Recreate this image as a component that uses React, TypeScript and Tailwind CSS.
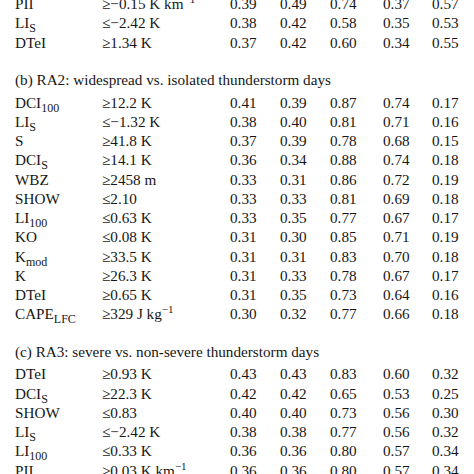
import React from "react";

type Row = { l: React.ReactNode; t: React.ReactNode; v: string[] };

const Sub = ({ c }: { c: string }) => (
  <span className="relative top-[4px] text-[12px] leading-none">{c}</span>
);
const Sup = ({ c }: { c: string }) => (
  <span className="relative -top-[6px] text-[11px] leading-none">{c}</span>
);

const L = (base: string, sub?: string) => (
  <span>
    {base}
    {sub ? <Sub c={sub} /> : null}
  </span>
);

const a: Row[] = [
  { l: L("PII"), t: <span>≥−0.15 K km<Sup c="−1" /></span>, v: ["0.39", "0.49", "0.74", "0.37", "0.57"] },
  { l: L("LI", "S"), t: "≤−2.42 K", v: ["0.38", "0.42", "0.58", "0.35", "0.53"] },
  { l: L("DTeI"), t: "≥1.34 K", v: ["0.37", "0.42", "0.60", "0.34", "0.55"] },
];

const b: Row[] = [
  { l: L("DCI", "100"), t: "≥12.2 K", v: ["0.41", "0.39", "0.87", "0.74", "0.17"] },
  { l: L("LI", "S"), t: "≤−1.32 K", v: ["0.38", "0.40", "0.81", "0.71", "0.16"] },
  { l: L("S"), t: "≥41.8 K", v: ["0.37", "0.39", "0.78", "0.68", "0.15"] },
  { l: L("DCI", "S"), t: "≥14.1 K", v: ["0.36", "0.34", "0.88", "0.74", "0.18"] },
  { l: L("WBZ"), t: "≥2458 m", v: ["0.33", "0.31", "0.86", "0.72", "0.19"] },
  { l: L("SHOW"), t: "≤2.10", v: ["0.33", "0.33", "0.81", "0.69", "0.18"] },
  { l: L("LI", "100"), t: "≤0.63 K", v: ["0.33", "0.35", "0.77", "0.67", "0.17"] },
  { l: L("KO"), t: "≤0.08 K", v: ["0.31", "0.30", "0.85", "0.71", "0.19"] },
  { l: L("K", "mod"), t: "≥33.5 K", v: ["0.31", "0.31", "0.83", "0.70", "0.18"] },
  { l: L("K"), t: "≥26.3 K", v: ["0.31", "0.33", "0.78", "0.67", "0.17"] },
  { l: L("DTeI"), t: "≥0.65 K", v: ["0.31", "0.35", "0.73", "0.64", "0.16"] },
  { l: L("CAPE", "LFC"), t: <span>≥329 J kg<Sup c="−1" /></span>, v: ["0.30", "0.32", "0.77", "0.66", "0.18"] },
];

const c: Row[] = [
  { l: L("DTeI"), t: "≥0.93 K", v: ["0.43", "0.43", "0.83", "0.60", "0.32"] },
  { l: L("DCI", "S"), t: "≥22.3 K", v: ["0.42", "0.42", "0.65", "0.53", "0.25"] },
  { l: L("SHOW"), t: "≤0.83", v: ["0.40", "0.40", "0.73", "0.56", "0.30"] },
  { l: L("LI", "S"), t: "≤−2.42 K", v: ["0.38", "0.38", "0.77", "0.56", "0.32"] },
  { l: L("LI", "100"), t: "≤0.33 K", v: ["0.36", "0.36", "0.80", "0.57", "0.34"] },
  { l: L("PII"), t: <span>≥0.03 K km<Sup c="−1" /></span>, v: ["0.36", "0.36", "0.80", "0.57", "0.34"] },
];

function Rows({ rows }: { rows: Row[] }) {
  return (
    <div className="flex flex-col">
      {rows.map((r, i) => (
        <div
          key={i}
          className="grid grid-cols-[87px_128px_50px_50px_53px_49px_1fr] h-[19.25px] leading-[19.25px] whitespace-nowrap"
        >
          <div>{r.l}</div>
          <div>{r.t}</div>
          {r.v.map((x, j) => (
            <div key={j}>{x}</div>
          ))}
        </div>
      ))}
    </div>
  );
}

function Header({ text }: { text: string }) {
  return (
    <div className="pt-[18.3px] pb-[3.3px] h-[40.85px] leading-[19.25px] whitespace-nowrap">
      {text}
    </div>
  );
}

export default function App() {
  return (
    <div className="w-[474px] h-[474px] overflow-hidden bg-white">
      <div
        className="-mt-[6px] pl-[15px] text-[15.2px] text-[#161616]"
        style={{ fontFamily: '"Liberation Serif", "Times New Roman", serif' }}
      >
        <Rows rows={a} />
        <Header text="(b) RA2: widespread vs. isolated thunderstorm days" />
        <Rows rows={b} />
        <Header text="(c) RA3: severe vs. non-severe thunderstorm days" />
        <Rows rows={c} />
      </div>
    </div>
  );
}
